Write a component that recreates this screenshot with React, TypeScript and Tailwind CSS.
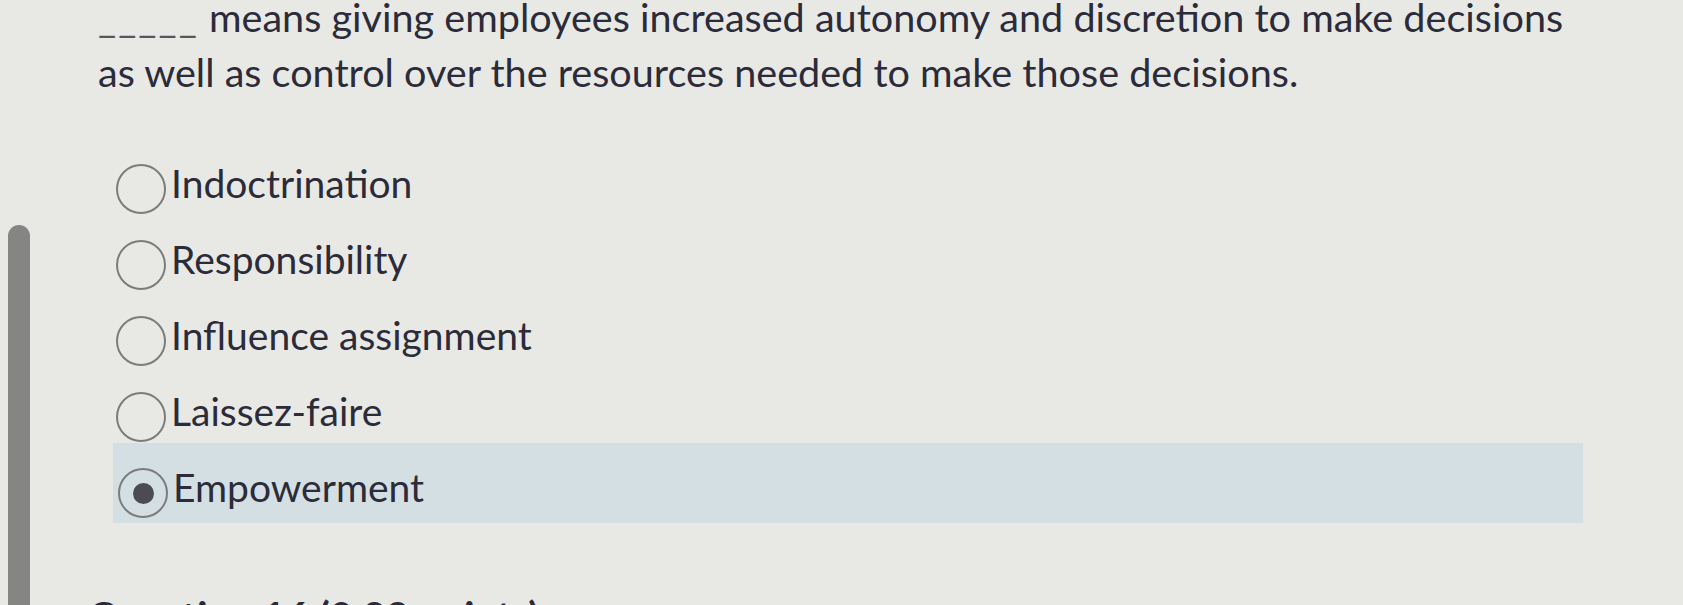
import React from 'react';

const options = ['Indoctrination', 'Responsibility', 'Influence assignment', 'Laissez-faire', 'Empowerment'];

const Radio = ({ checked }: { checked: boolean }) => (
  <span className="flex h-[50px] w-[50px] shrink-0 items-center justify-center rounded-full border-2 border-[#7b7c7c]">
    {checked && <span className="h-[21px] w-[21px] rounded-full bg-[#4a4c52]" />}
  </span>
);

export default function App() {
  const selected = 'Empowerment';

  return (
    <div className="flex h-[605px] w-[1683px] overflow-hidden bg-[#e8e9e4] font-['Lato','Noto_Sans',sans-serif] text-[#2b2b3a]">
      {/* left rail */}
      <div className="w-[98px] shrink-0 pl-[8px] pt-[225px]">
        <div className="h-[400px] w-[22px] rounded-t-full bg-[#858684]" />
      </div>

      <div className="flex min-w-0 flex-1 flex-col">
        <p className="-mt-[11px] w-[1490px] text-[39.6px] leading-[55px]">
          <span className="tracking-[2px] text-[#55565e]">_____</span> means giving employees increased autonomy and discretion to make decisions as well as
          control over the resources needed to make those decisions.
        </p>

        <div className="mt-[52px] flex w-[1485px] flex-col pl-[15px]">
          {options.map((opt) => {
            const checked = opt === selected;
            return (
              <label
                key={opt}
                className={`flex items-center gap-[5px] ${
                  checked ? '-mt-[12px] h-[80px] bg-[#d4dfe3] pl-[5px] pt-[20px]' : 'h-[76px] pl-[3px]'
                }`}
              >
                <Radio checked={checked} />
                <span className="pb-[11px] text-[39px] leading-none">{opt}</span>
              </label>
            );
          })}
        </div>

        <div className="mt-[73px] flex text-[40px] font-bold leading-none">
          <span className="-ml-[10px]">Question 16 (0.33 points)</span>
        </div>
      </div>
    </div>
  );
}
